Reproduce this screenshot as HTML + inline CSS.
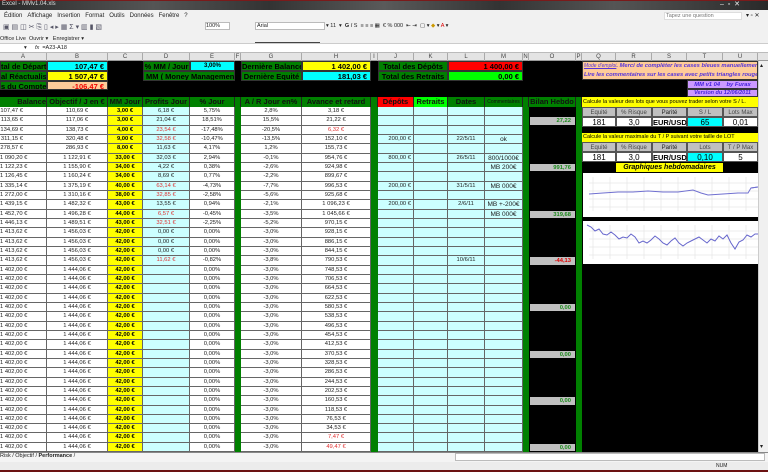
<!DOCTYPE html>
<html><head><meta charset="utf-8">
<style>
*{margin:0;padding:0;box-sizing:border-box}
body{width:768px;height:472px;overflow:hidden;background:#000;font-family:"Liberation Sans",sans-serif;position:relative}
.ab{position:absolute}
.t{font-size:6px;color:#222;white-space:nowrap}
.r{display:flex;height:9.33px}
.r>i{font-style:normal;display:block;height:9.33px;font-size:5.8px;line-height:9px;white-space:nowrap;overflow:hidden;border-right:1px solid #666;border-bottom:1px solid #666;text-align:center;color:#222;background:#fff}
.r>i:nth-child(1){width:47px;text-align:right;padding-right:23px}
.r>i:nth-child(2){width:61px}
.r>i:nth-child(3){width:35px;background:#ffff00;font-weight:bold;color:#000}
.r>i:nth-child(4){width:47px;background:#ccffff}
.r>i:nth-child(5){width:45px}
.r>i:nth-child(6){width:6px;background:#008000;border:none}
.r>i:nth-child(7){width:61px}
.r>i:nth-child(8){width:69px}
.r>i:nth-child(9){width:7px;background:#008000;border:none}
.r>i:nth-child(10){width:36px;background:#ccffff;text-align:right;padding-right:2px}
.r>i:nth-child(11){width:34px;background:#ccffff}
.r>i:nth-child(12){width:37px;background:#ccffff}
.r>i:nth-child(13){width:38px;background:#ccffff;font-size:6.5px}
.r>i:nth-child(14){width:6px;background:#008000;border:none}
.r>i:nth-child(15){width:47px;background:#000;border:none;text-align:right;padding-right:4px;font-weight:bold}
.r>i:nth-child(16){width:6px;background:#008000;border:none}
.r>i.n{color:#e03030}
.r>i.w{background:#c0c0c0;color:#1a8a1a;border:1px solid #000}
.r>i.w.n{color:#e00000}
.c{position:absolute;font-size:7.5px;font-weight:bold;line-height:9px;white-space:nowrap;overflow:hidden;border:1px solid #333}
.h{position:absolute;top:97px;height:10px;background:#008000;font-size:7.5px;font-weight:bold;color:#111;text-align:center;line-height:10px;border-right:1px solid #222;white-space:nowrap;overflow:hidden}
.ch{position:absolute;top:53px;height:8px;font-size:6px;color:#444;text-align:center;line-height:8px;border-right:1px solid #aaa}
.q{position:absolute;height:10px;font-size:6px;text-align:center;line-height:10px;border:1px solid #555;white-space:nowrap}
</style></head><body>
<!-- title bar -->
<div class="ab" style="left:0;top:0;width:768px;height:10px;background:linear-gradient(90deg,#2a2a2a,#555 20%,#333 35%,#5a5a5a 50%,#333 65%,#555 80%,#2a2a2a);border-top:1px solid #7a1a1a"></div>
<div class="ab t" style="left:2px;top:1px;color:#ddd;font-size:6px">Excel - MMv1.04.xls</div>
<div class="ab t" style="left:720px;top:0;color:#eee;font-size:7px">–&nbsp;&nbsp;▫&nbsp;&nbsp;✕</div>
<!-- menus & toolbars -->
<div class="ab" style="left:0;top:10px;width:768px;height:34px;background:#f1f1f1;border-bottom:1px solid #ccc"></div>
<div class="ab t" style="left:4px;top:13px;font-size:6px">Édition&nbsp;&nbsp;&nbsp;Affichage&nbsp;&nbsp;&nbsp;Insertion&nbsp;&nbsp;&nbsp;Format&nbsp;&nbsp;&nbsp;Outils&nbsp;&nbsp;&nbsp;Données&nbsp;&nbsp;&nbsp;Fenêtre&nbsp;&nbsp;&nbsp;?</div>
<div class="ab" style="left:664px;top:12px;width:78px;height:8px;background:#fff;border:1px solid #ddd"></div>
<div class="ab t" style="left:666px;top:13px;font-size:5.5px;color:#777">Tapez une question</div>
<div class="ab t" style="left:746px;top:12px;font-size:6px">▾ ▫ ✕</div>
<div class="ab t" style="left:3px;top:23px;font-size:7px;color:#556">▣ ▤ ◫ ✂ ⎘ ▯ ◂ ▸ ▦ Σ ▾ ▥ ▮ ▧</div>
<div class="ab" style="left:205px;top:22px;width:25px;height:8px;background:#fff;border:1px solid #bbb"></div>
<div class="ab t" style="left:206px;top:23px;font-size:5.5px">100%</div>
<div class="ab" style="left:255px;top:22px;width:70px;height:8px;background:#fff;border:1px solid #bbb"></div>
<div class="ab t" style="left:257px;top:23px;font-size:5.5px">Arial</div>
<div class="ab t" style="left:326px;top:23px;font-size:5.5px">▾ 11 &nbsp;▾ &nbsp;<b>G</b> <i>I</i> S &nbsp;≡ ≡ ≡ ▦ &nbsp;€ % 000 &nbsp;⇤ ⇥ &nbsp;▢ ▾ <span style="color:#c90">◆</span> ▾ <span style="color:#d00">A</span> ▾</div>
<div class="ab t" style="left:0;top:36px;font-size:5.5px">Office Live &nbsp;Ouvrir ▾ &nbsp;&nbsp;Enregistrer ▾</div>
<div class="ab" style="left:255px;top:37px;width:65px;height:6px;border-bottom:1px solid #444"></div>
<!-- formula bar -->
<div class="ab" style="left:0;top:44px;width:768px;height:9px;background:#fff;border-bottom:1px solid #bbb"></div>
<div class="ab t" style="left:24px;top:45px;font-size:5.5px">▾</div>
<div class="ab t" style="left:35px;top:45px;font-size:5.5px"><i>fx</i> &nbsp;=A23-A18</div>
<!-- column headers -->
<div class="ab" style="left:0;top:53px;width:768px;height:8px;background:#e4e4e4;border-bottom:1px solid #999"></div>
<div class="ch" style="left:0;width:47px">A</div><div class="ch" style="left:47px;width:61px">B</div><div class="ch" style="left:108px;width:35px">C</div><div class="ch" style="left:143px;width:47px">D</div><div class="ch" style="left:190px;width:45px">E</div><div class="ch" style="left:235px;width:6px">F</div><div class="ch" style="left:241px;width:61px">G</div><div class="ch" style="left:302px;width:69px">H</div><div class="ch" style="left:371px;width:7px">I</div><div class="ch" style="left:378px;width:36px">J</div><div class="ch" style="left:414px;width:34px">K</div><div class="ch" style="left:448px;width:37px">L</div><div class="ch" style="left:485px;width:38px">M</div><div class="ch" style="left:523px;width:6px">N</div><div class="ch" style="left:529px;width:47px">O</div><div class="ch" style="left:576px;width:6px">P</div><div class="ch" style="left:582px;width:34px">Q</div><div class="ch" style="left:616px;width:36px">R</div><div class="ch" style="left:652px;width:35px">S</div><div class="ch" style="left:687px;width:36px">T</div><div class="ch" style="left:723px;width:35px">U</div>
<!-- top cells -->
<div class="c" style="left:0;top:61px;width:47px;height:10px;background:#008000;color:#000;text-align:right">tal de Départ</div>
<div class="c" style="left:0;top:71px;width:47px;height:10px;background:#008000;color:#000;text-align:right">al Réactualisé</div>
<div class="c" style="left:0;top:81px;width:47px;height:9px;background:#008000;color:#000;text-align:right">s du Compte</div>
<div class="c" style="left:47px;top:61px;width:61px;height:10px;background:#00ffff;text-align:right;padding-right:3px">107,47 €</div>
<div class="c" style="left:47px;top:71px;width:61px;height:10px;background:#ffff00;text-align:right;padding-right:3px">1 507,47 €</div>
<div class="c" style="left:47px;top:81px;width:61px;height:9px;background:#ffcc99;color:#e00;text-align:right;padding-right:3px">-106,47 €</div>
<div class="c" style="left:143px;top:61px;width:47px;height:10px;background:#008000;text-align:center">% MM / Jour</div>
<div class="c" style="left:190px;top:61px;width:45px;height:10px;background:#00ffff;text-align:center;font-size:6px">3,00%</div>
<div class="c" style="left:143px;top:71px;width:92px;height:10px;background:#008000;text-align:left;padding-left:2px">MM ( Money Management)</div>
<div class="c" style="left:241px;top:61px;width:61px;height:10px;background:#008000;text-align:center">Dernière Balance</div>
<div class="c" style="left:241px;top:71px;width:61px;height:10px;background:#008000;text-align:center">Dernière Equité</div>
<div class="c" style="left:302px;top:61px;width:69px;height:10px;background:#ffff00;text-align:right;padding-right:3px">1 402,00 €</div>
<div class="c" style="left:302px;top:71px;width:69px;height:10px;background:#00ffff;text-align:right;padding-right:3px">181,03 €</div>
<div class="c" style="left:378px;top:61px;width:70px;height:10px;background:#008000;text-align:center">Total des Dépôts</div>
<div class="c" style="left:378px;top:71px;width:70px;height:10px;background:#008000;text-align:center">Total des Retraits</div>
<div class="c" style="left:448px;top:61px;width:75px;height:10px;background:#ff0000;text-align:right;padding-right:3px">1 400,00 €</div>
<div class="c" style="left:448px;top:71px;width:75px;height:10px;background:#00ff00;text-align:right;padding-right:3px">0,00 €</div>
<div class="c" style="left:582px;top:61px;width:176px;height:19px;background:#ffcc99;color:#5533dd;font-style:italic;font-size:5.8px;line-height:9px;padding-left:1px"><span style="font-weight:normal;text-decoration:underline;font-size:5px">Mode d'emploi</span>. Merci de compléter les cases bleues manuellement<br>Lire les commentaires sur les cases avec petits triangles rouges</div>
<div class="c" style="left:687px;top:80px;width:71px;height:9px;background:#cc99ff;color:#4422dd;font-style:italic;font-size:5.8px;line-height:8px;text-align:center">MM v1 04 &nbsp;&nbsp;&nbsp;by Furax</div>
<div class="c" style="left:687px;top:89px;width:71px;height:8px;background:#cc99ff;color:#4422dd;font-style:italic;font-size:5.5px;line-height:7px;text-align:center">Version du 12/06/2011</div>
<!-- header row -->
<div class="h" style="left:0;width:47px;text-align:right">Balance</div>
<div class="h" style="left:47px;width:61px">Objectif / J en €</div>
<div class="h" style="left:108px;width:35px">MM Jour</div>
<div class="h" style="left:143px;width:47px">Profits Jour</div>
<div class="h" style="left:190px;width:45px">% Jour</div>
<div class="h" style="left:235px;width:6px"></div>
<div class="h" style="left:241px;width:61px">A / R Jour en%</div>
<div class="h" style="left:302px;width:69px">Avance et retard</div>
<div class="h" style="left:371px;width:7px"></div>
<div class="h" style="left:378px;width:36px;background:#ff0000">Dépôts</div>
<div class="h" style="left:414px;width:34px;background:#00ff00">Retraits</div>
<div class="h" style="left:448px;width:37px">Dates</div>
<div class="h" style="left:485px;width:38px;font-size:5px;font-weight:normal">Commentaires</div>
<div class="h" style="left:523px;width:6px"></div>
<div class="h" style="left:529px;width:47px">Bilan Hebdo</div>
<div class="h" style="left:576px;width:6px"></div>
<div class="ab" style="left:582px;top:97px;width:176px;height:10px;background:#ffff00;font-size:5.5px;line-height:10px;padding-left:1px;white-space:nowrap;overflow:hidden">Calcule la valeur des lots que vous pouvez trader selon votre S / L.</div>
<!-- data grid -->
<div class="ab" style="left:0;top:107px;width:582px">
<div class="r"><i>107,47 €</i><i>110,69 €</i><i>3,00 €</i><i>6,18 €</i><i>5,75%</i><i></i><i>2,8%</i><i>3,18 €</i><i></i><i></i><i></i><i></i><i></i><i></i><i></i><i></i></div>
<div class="r"><i>113,65 €</i><i>117,06 €</i><i>3,00 €</i><i>21,04 €</i><i>18,51%</i><i></i><i>15,5%</i><i>21,22 €</i><i></i><i></i><i></i><i></i><i></i><i></i><i class="w">27,22</i><i></i></div>
<div class="r"><i>134,69 €</i><i>138,73 €</i><i>4,00 €</i><i class="n">23,54 €</i><i>-17,48%</i><i></i><i>-20,5%</i><i class="n">6,32 €</i><i></i><i></i><i></i><i></i><i></i><i></i><i></i><i></i></div>
<div class="r"><i>311,15 €</i><i>320,48 €</i><i>9,00 €</i><i class="n">32,58 €</i><i>-10,47%</i><i></i><i>-13,5%</i><i>152,10 €</i><i></i><i>200,00 €</i><i></i><i>22/5/11</i><i>ok</i><i></i><i></i><i></i></div>
<div class="r"><i>278,57 €</i><i>286,93 €</i><i>8,00 €</i><i>11,63 €</i><i>4,17%</i><i></i><i>1,2%</i><i>155,73 €</i><i></i><i></i><i></i><i></i><i></i><i></i><i></i><i></i></div>
<div class="r"><i>1 090,20 €</i><i>1 122,91 €</i><i>33,00 €</i><i>32,03 €</i><i>2,94%</i><i></i><i>-0,1%</i><i>954,76 €</i><i></i><i>800,00 €</i><i></i><i>26/5/11</i><i>800/1000€</i><i></i><i></i><i></i></div>
<div class="r"><i>1 122,23 €</i><i>1 155,90 €</i><i>34,00 €</i><i>4,22 €</i><i>0,38%</i><i></i><i>-2,6%</i><i>924,98 €</i><i></i><i></i><i></i><i></i><i>MB 200€</i><i></i><i class="w">991,76</i><i></i></div>
<div class="r"><i>1 126,45 €</i><i>1 160,24 €</i><i>34,00 €</i><i>8,69 €</i><i>0,77%</i><i></i><i>-2,2%</i><i>899,67 €</i><i></i><i></i><i></i><i></i><i></i><i></i><i></i><i></i></div>
<div class="r"><i>1 335,14 €</i><i>1 375,19 €</i><i>40,00 €</i><i class="n">63,14 €</i><i>-4,73%</i><i></i><i>-7,7%</i><i>996,53 €</i><i></i><i>200,00 €</i><i></i><i>31/5/11</i><i>MB 000€</i><i></i><i></i><i></i></div>
<div class="r"><i>1 272,00 €</i><i>1 310,16 €</i><i>38,00 €</i><i class="n">32,85 €</i><i>-2,58%</i><i></i><i>-5,6%</i><i>925,68 €</i><i></i><i></i><i></i><i></i><i></i><i></i><i></i><i></i></div>
<div class="r"><i>1 439,15 €</i><i>1 482,32 €</i><i>43,00 €</i><i>13,55 €</i><i>0,94%</i><i></i><i>-2,1%</i><i>1 096,23 €</i><i></i><i>200,00 €</i><i></i><i>2/6/11</i><i>MB +-200€</i><i></i><i></i><i></i></div>
<div class="r"><i>1 452,70 €</i><i>1 496,28 €</i><i>44,00 €</i><i class="n">6,57 €</i><i>-0,45%</i><i></i><i>-3,5%</i><i>1 045,66 €</i><i></i><i></i><i></i><i></i><i>MB 000€</i><i></i><i class="w">319,68</i><i></i></div>
<div class="r"><i>1 446,13 €</i><i>1 489,51 €</i><i>43,00 €</i><i class="n">32,51 €</i><i>-2,25%</i><i></i><i>-5,2%</i><i>970,15 €</i><i></i><i></i><i></i><i></i><i></i><i></i><i></i><i></i></div>
<div class="r"><i>1 413,62 €</i><i>1 456,03 €</i><i>42,00 €</i><i>0,00 €</i><i>0,00%</i><i></i><i>-3,0%</i><i>928,15 €</i><i></i><i></i><i></i><i></i><i></i><i></i><i></i><i></i></div>
<div class="r"><i>1 413,62 €</i><i>1 456,03 €</i><i>42,00 €</i><i>0,00 €</i><i>0,00%</i><i></i><i>-3,0%</i><i>886,15 €</i><i></i><i></i><i></i><i></i><i></i><i></i><i></i><i></i></div>
<div class="r"><i>1 413,62 €</i><i>1 456,03 €</i><i>42,00 €</i><i>0,00 €</i><i>0,00%</i><i></i><i>-3,0%</i><i>844,15 €</i><i></i><i></i><i></i><i></i><i></i><i></i><i></i><i></i></div>
<div class="r"><i>1 413,62 €</i><i>1 456,03 €</i><i>42,00 €</i><i class="n">11,62 €</i><i>-0,82%</i><i></i><i>-3,8%</i><i>790,53 €</i><i></i><i></i><i></i><i>10/6/11</i><i></i><i></i><i class="w n">-44,13</i><i></i></div>
<div class="r"><i>1 402,00 €</i><i>1 444,06 €</i><i>42,00 €</i><i></i><i>0,00%</i><i></i><i>-3,0%</i><i>748,53 €</i><i></i><i></i><i></i><i></i><i></i><i></i><i></i><i></i></div>
<div class="r"><i>1 402,00 €</i><i>1 444,06 €</i><i>42,00 €</i><i></i><i>0,00%</i><i></i><i>-3,0%</i><i>706,53 €</i><i></i><i></i><i></i><i></i><i></i><i></i><i></i><i></i></div>
<div class="r"><i>1 402,00 €</i><i>1 444,06 €</i><i>42,00 €</i><i></i><i>0,00%</i><i></i><i>-3,0%</i><i>664,53 €</i><i></i><i></i><i></i><i></i><i></i><i></i><i></i><i></i></div>
<div class="r"><i>1 402,00 €</i><i>1 444,06 €</i><i>42,00 €</i><i></i><i>0,00%</i><i></i><i>-3,0%</i><i>622,53 €</i><i></i><i></i><i></i><i></i><i></i><i></i><i></i><i></i></div>
<div class="r"><i>1 402,00 €</i><i>1 444,06 €</i><i>42,00 €</i><i></i><i>0,00%</i><i></i><i>-3,0%</i><i>580,53 €</i><i></i><i></i><i></i><i></i><i></i><i></i><i class="w">0,00</i><i></i></div>
<div class="r"><i>1 402,00 €</i><i>1 444,06 €</i><i>42,00 €</i><i></i><i>0,00%</i><i></i><i>-3,0%</i><i>538,53 €</i><i></i><i></i><i></i><i></i><i></i><i></i><i></i><i></i></div>
<div class="r"><i>1 402,00 €</i><i>1 444,06 €</i><i>42,00 €</i><i></i><i>0,00%</i><i></i><i>-3,0%</i><i>496,53 €</i><i></i><i></i><i></i><i></i><i></i><i></i><i></i><i></i></div>
<div class="r"><i>1 402,00 €</i><i>1 444,06 €</i><i>42,00 €</i><i></i><i>0,00%</i><i></i><i>-3,0%</i><i>454,53 €</i><i></i><i></i><i></i><i></i><i></i><i></i><i></i><i></i></div>
<div class="r"><i>1 402,00 €</i><i>1 444,06 €</i><i>42,00 €</i><i></i><i>0,00%</i><i></i><i>-3,0%</i><i>412,53 €</i><i></i><i></i><i></i><i></i><i></i><i></i><i></i><i></i></div>
<div class="r"><i>1 402,00 €</i><i>1 444,06 €</i><i>42,00 €</i><i></i><i>0,00%</i><i></i><i>-3,0%</i><i>370,53 €</i><i></i><i></i><i></i><i></i><i></i><i></i><i class="w">0,00</i><i></i></div>
<div class="r"><i>1 402,00 €</i><i>1 444,06 €</i><i>42,00 €</i><i></i><i>0,00%</i><i></i><i>-3,0%</i><i>328,53 €</i><i></i><i></i><i></i><i></i><i></i><i></i><i></i><i></i></div>
<div class="r"><i>1 402,00 €</i><i>1 444,06 €</i><i>42,00 €</i><i></i><i>0,00%</i><i></i><i>-3,0%</i><i>286,53 €</i><i></i><i></i><i></i><i></i><i></i><i></i><i></i><i></i></div>
<div class="r"><i>1 402,00 €</i><i>1 444,06 €</i><i>42,00 €</i><i></i><i>0,00%</i><i></i><i>-3,0%</i><i>244,53 €</i><i></i><i></i><i></i><i></i><i></i><i></i><i></i><i></i></div>
<div class="r"><i>1 402,00 €</i><i>1 444,06 €</i><i>42,00 €</i><i></i><i>0,00%</i><i></i><i>-3,0%</i><i>202,53 €</i><i></i><i></i><i></i><i></i><i></i><i></i><i></i><i></i></div>
<div class="r"><i>1 402,00 €</i><i>1 444,06 €</i><i>42,00 €</i><i></i><i>0,00%</i><i></i><i>-3,0%</i><i>160,53 €</i><i></i><i></i><i></i><i></i><i></i><i></i><i class="w">0,00</i><i></i></div>
<div class="r"><i>1 402,00 €</i><i>1 444,06 €</i><i>42,00 €</i><i></i><i>0,00%</i><i></i><i>-3,0%</i><i>118,53 €</i><i></i><i></i><i></i><i></i><i></i><i></i><i></i><i></i></div>
<div class="r"><i>1 402,00 €</i><i>1 444,06 €</i><i>42,00 €</i><i></i><i>0,00%</i><i></i><i>-3,0%</i><i>76,53 €</i><i></i><i></i><i></i><i></i><i></i><i></i><i></i><i></i></div>
<div class="r"><i>1 402,00 €</i><i>1 444,06 €</i><i>42,00 €</i><i></i><i>0,00%</i><i></i><i>-3,0%</i><i>34,53 €</i><i></i><i></i><i></i><i></i><i></i><i></i><i></i><i></i></div>
<div class="r"><i>1 402,00 €</i><i>1 444,06 €</i><i>42,00 €</i><i></i><i>0,00%</i><i></i><i>-3,0%</i><i class="n">7,47 €</i><i></i><i></i><i></i><i></i><i></i><i></i><i></i><i></i></div>
<div class="r"><i>1 402,00 €</i><i>1 444,06 €</i><i>42,00 €</i><i></i><i>0,00%</i><i></i><i>-3,0%</i><i class="n">49,47 €</i><i></i><i></i><i></i><i></i><i></i><i></i><i class="w">0,00</i><i></i></div>
</div>
<!-- right calc tables -->
<div class="q" style="left:582px;top:107px;width:34px;background:#c0c0c0;color:#444">Equité</div>
<div class="q" style="left:616px;top:107px;width:36px;background:#c0c0c0;color:#444">% Risque</div>
<div class="q" style="left:652px;top:107px;width:35px;background:#c0c0c0;color:#222">Parité</div>
<div class="q" style="left:687px;top:107px;width:36px;background:#c0c0c0;color:#444">S / L</div>
<div class="q" style="left:723px;top:107px;width:35px;background:#c0c0c0;color:#444">Lots Max</div>
<div class="q" style="left:582px;top:117px;width:34px;background:#fff;font-size:8px">181</div>
<div class="q" style="left:616px;top:117px;width:36px;background:#fff;font-size:8px">3,0</div>
<div class="q" style="left:652px;top:117px;width:35px;background:#fff;font-size:7.5px;font-weight:bold">EUR/USD</div>
<div class="q" style="left:687px;top:117px;width:36px;background:#00ffff;font-size:8px">65</div>
<div class="q" style="left:723px;top:117px;width:35px;background:#fff;font-size:8px">0,01</div>
<div class="ab" style="left:582px;top:133px;width:176px;height:9px;background:#ffff00;font-size:5.5px;line-height:9px;padding-left:1px;white-space:nowrap">Calcule la valeur maximale du T / P suivant votre taille de LOT</div>
<div class="q" style="left:582px;top:142px;width:34px;background:#c0c0c0;color:#444">Equité</div>
<div class="q" style="left:616px;top:142px;width:36px;background:#c0c0c0;color:#444">% Risque</div>
<div class="q" style="left:652px;top:142px;width:35px;background:#c0c0c0;color:#222">Parité</div>
<div class="q" style="left:687px;top:142px;width:36px;background:#c0c0c0;color:#444">Lots</div>
<div class="q" style="left:723px;top:142px;width:35px;background:#c0c0c0;color:#444">T / P Max</div>
<div class="q" style="left:582px;top:152px;width:34px;background:#fff;font-size:8px">181</div>
<div class="q" style="left:616px;top:152px;width:36px;background:#fff;font-size:8px">3,0</div>
<div class="q" style="left:652px;top:152px;width:35px;background:#fff;font-size:7.5px;font-weight:bold">EUR/USD</div>
<div class="q" style="left:687px;top:152px;width:36px;background:#00ffff;font-size:8px">0,10</div>
<div class="q" style="left:723px;top:152px;width:35px;background:#fff;font-size:8px">5</div>
<div class="ab" style="left:616px;top:163px;width:107px;height:9px;background:#ffff00;font-size:7px;font-weight:bold;font-style:italic;line-height:9px;text-align:center">Graphiques hebdomadaires</div>
<!-- charts -->
<svg class="ab" style="left:583px;top:173px" width="175" height="44" viewBox="0 0 175 44">
<rect width="175" height="44" fill="#fff"/>
<g stroke="#ddd" stroke-width="0.5"><path d="M10 4V38M27 4V38M44 4V38M61 4V38M78 4V38M95 4V38M112 4V38M129 4V38M146 4V38M163 4V38M6 10H175M6 18H175M6 26H175M6 34H175"/></g>
<polyline fill="none" stroke="#7070d0" stroke-width="1" points="6,21 20,20 35,19 50,19 65,18 80,19 95,19 110,17 118,20 125,22 140,21 155,20 165,20 168,15 175,14"/>
<polyline fill="none" stroke="#7070d0" stroke-width="1" points="168,15 175,14"/>
</svg>
<svg class="ab" style="left:583px;top:221px" width="175" height="43" viewBox="0 0 175 43">
<rect width="175" height="43" fill="#fff"/>
<g stroke="#ddd" stroke-width="0.5"><path d="M10 4V38M27 4V38M44 4V38M61 4V38M78 4V38M95 4V38M112 4V38M129 4V38M146 4V38M163 4V38M6 10H175M6 18H175M6 26H175M6 34H175"/></g>
<polyline fill="none" stroke="#6666cc" stroke-width="1" points="4,4 8,6 12,10 16,8 20,13 24,14 28,11 32,14 36,18 40,16 44,17 48,13 52,16 56,22 60,20 64,22 68,19 72,15 76,18 80,22 84,24 88,20 92,17 96,22 100,25 104,22 108,20 112,18 116,16 120,19 124,22 128,18 132,20 136,15 140,18 144,14 148,22 152,28 156,21 160,19 164,14 168,16 172,13 175,13"/>
</svg>
<!-- scrollbar -->
<div class="ab" style="left:758px;top:61px;width:10px;height:391px;background:#f0f0f0;border-left:1px solid #ccc"></div>
<div class="ab t" style="left:760px;top:62px;font-size:6px">▴</div>
<div class="ab t" style="left:760px;top:443px;font-size:6px">▾</div>
<!-- bottom -->
<div class="ab" style="left:0;top:452px;width:768px;height:10px;background:#f4f4f4;border-top:1px solid #888"></div>
<div class="ab t" style="left:0;top:453px;font-size:5.5px">Risk / Objectif / <b>Performance</b> /</div>
<div class="ab" style="left:455px;top:453px;width:310px;height:8px;background:#fff;border:1px solid #bbb"></div>
<div class="ab" style="left:0;top:462px;width:768px;height:8px;background:#ececec"></div>
<div class="ab t" style="left:716px;top:463px;font-size:5px">NUM</div>
<div class="ab" style="left:0;top:470px;width:768px;height:2px;background:#6b1212"></div>
</body></html>
